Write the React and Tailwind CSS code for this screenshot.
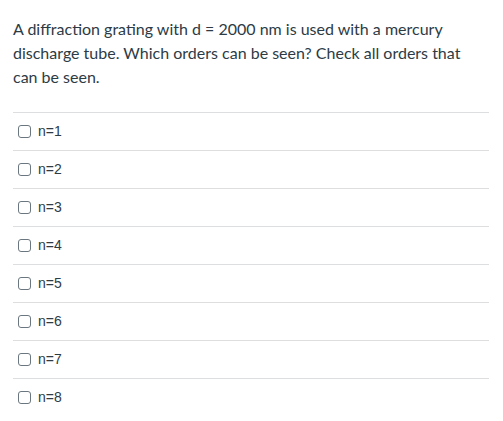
export default function App() {
  const orders = [1, 2, 3, 4, 5, 6, 7, 8];

  return (
    <div className="min-h-screen bg-white px-[13px] pt-[17px] font-['Lato','Liberation_Sans',sans-serif] text-[#2d3b45]">
      <p className="w-[460px] text-[16px] leading-[24px]">
        A diffraction grating with d = 2000 nm is used with a mercury discharge tube. Which orders can be seen? Check all orders that can be seen.
      </p>
      <div className="mt-[23px] w-[476px]">
        {orders.map((n) => (
          <label
            key={n}
            className="flex h-[38px] items-center border-t border-[#dcdedf] pl-[5px]"
          >
            <span className="h-[13px] w-[13px] rounded-[3px] border border-[#6b7780] bg-white" />
            <span className="ml-[7px] font-['Liberation_Sans',Arial,sans-serif] text-[14px] text-[#2d3b45]">
              n={n}
            </span>
          </label>
        ))}
      </div>
    </div>
  );
}
